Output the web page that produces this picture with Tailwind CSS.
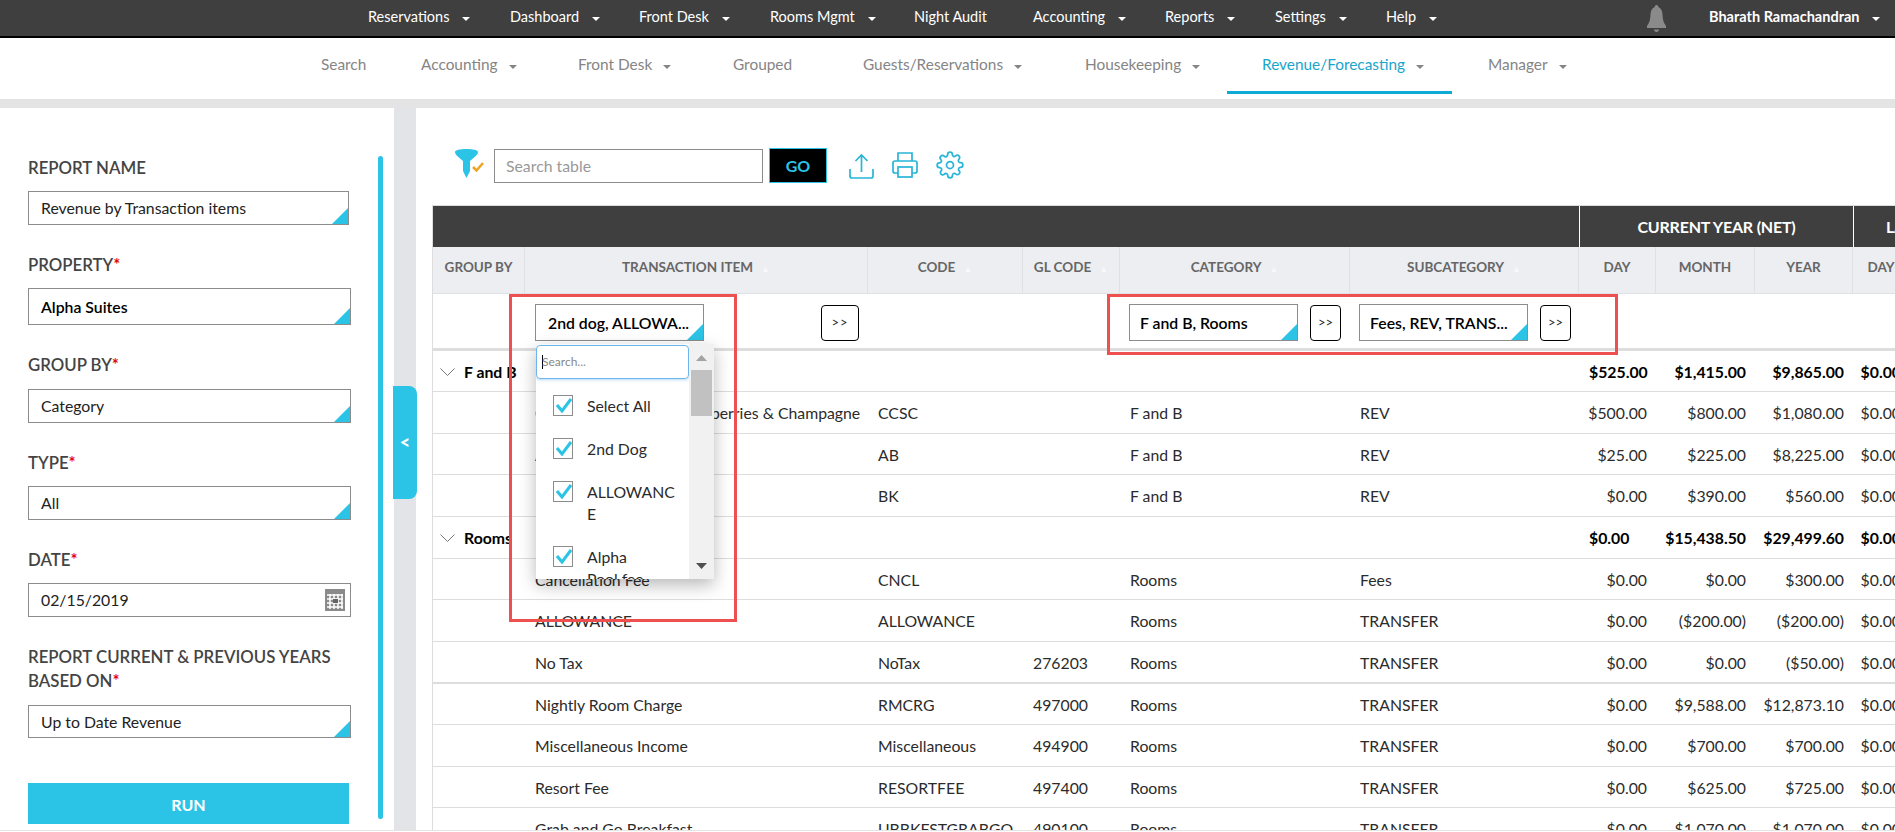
<!DOCTYPE html>
<html lang="en">
<head>
  <meta charset="UTF-8" />
  <title>Revenue by Transaction items</title>
  <script src="https://cdn.jsdelivr.net/npm/@tailwindcss/browser@4"></script>
</head>
<body class="h-[832px] w-[1895px] overflow-hidden bg-white font-['Lato',sans-serif] text-[#333]">

  <!-- Top nav -->
  <nav class="flex h-[38px] items-center border-b-2 border-black bg-[#3f3f3f] pb-[2px] pl-[368px] text-[14.5px] text-white">
    <a class="flex w-[142px] items-center">Reservations<svg class="ml-[13px] mt-[3px] h-[4px] w-2" viewBox="0 0 8 4" fill="#fff"><path d="M0 0h8L4 4z"/></svg></a>
    <a class="flex w-[129px] items-center">Dashboard<svg class="ml-[13px] mt-[3px] h-[4px] w-2" viewBox="0 0 8 4" fill="#fff"><path d="M0 0h8L4 4z"/></svg></a>
    <a class="flex w-[131px] items-center">Front Desk<svg class="ml-[13px] mt-[3px] h-[4px] w-2" viewBox="0 0 8 4" fill="#fff"><path d="M0 0h8L4 4z"/></svg></a>
    <a class="flex w-[144px] items-center">Rooms Mgmt<svg class="ml-[13px] mt-[3px] h-[4px] w-2" viewBox="0 0 8 4" fill="#fff"><path d="M0 0h8L4 4z"/></svg></a>
    <a class="flex w-[119px] items-center">Night Audit</a>
    <a class="flex w-[132px] items-center">Accounting<svg class="ml-[13px] mt-[3px] h-[4px] w-2" viewBox="0 0 8 4" fill="#fff"><path d="M0 0h8L4 4z"/></svg></a>
    <a class="flex w-[110px] items-center">Reports<svg class="ml-[13px] mt-[3px] h-[4px] w-2" viewBox="0 0 8 4" fill="#fff"><path d="M0 0h8L4 4z"/></svg></a>
    <a class="flex w-[111px] items-center">Settings<svg class="ml-[13px] mt-[3px] h-[4px] w-2" viewBox="0 0 8 4" fill="#fff"><path d="M0 0h8L4 4z"/></svg></a>
    <a class="flex w-[260px] items-center">Help<svg class="ml-[13px] mt-[3px] h-[4px] w-2" viewBox="0 0 8 4" fill="#fff"><path d="M0 0h8L4 4z"/></svg></a>
    <svg class="mt-[3px] h-[27px] w-[21px]" viewBox="0 0 21 27" fill="#8a8a8a"><path d="M10.5 0c1.2 0 1.8.8 1.8 2 3 1.2 4 4 4.200 7.500.2 4.500.8 8 3.500 11.500v2H1v-2c2.700-3.500 3.300-7 3.500-11.500C4.700 6 5.700 3.200 8.700 2c0-1.200.6-2 1.800-2z"/><path d="M8 24.500h5c0 1.500-1 2.500-2.500 2.500S8 26 8 24.500z"/></svg>
    <a class="ml-[42px] flex items-center font-bold">Bharath Ramachandran<svg class="ml-[13px] mt-[3px] h-[4px] w-2" viewBox="0 0 8 4" fill="#fff"><path d="M0 0h8L4 4z"/></svg></a>
  </nav>

  <!-- Sub nav -->
  <div class="flex h-[61px] pl-[321px] text-[15.4px] text-[#858585] [&>a]:border-b-[3px] [&>a]:border-transparent">
    <a class="flex h-[56px] w-[100px] items-center">Search</a>
    <a class="flex h-[56px] w-[157px] items-center">Accounting<svg class="ml-[11px] mt-1 h-[4px] w-2" viewBox="0 0 8 4" fill="#858585"><path d="M0 0h8L4 4z"/></svg></a>
    <a class="flex h-[56px] w-[155px] items-center">Front Desk<svg class="ml-[11px] mt-1 h-[4px] w-2" viewBox="0 0 8 4" fill="#858585"><path d="M0 0h8L4 4z"/></svg></a>
    <a class="flex h-[56px] w-[130px] items-center">Grouped</a>
    <a class="flex h-[56px] w-[222px] items-center">Guests/Reservations<svg class="ml-[11px] mt-1 h-[4px] w-2" viewBox="0 0 8 4" fill="#858585"><path d="M0 0h8L4 4z"/></svg></a>
    <a class="flex h-[56px] w-[142px] items-center">Housekeeping<svg class="ml-[11px] mt-1 h-[4px] w-2" viewBox="0 0 8 4" fill="#858585"><path d="M0 0h8L4 4z"/></svg></a>
    <a class="flex h-[56px] w-[225px] items-center border-[#0ea9d4]! pl-[35px] text-[#1aa5cb]">Revenue/Forecasting<svg class="ml-[11px] mt-1 h-[4px] w-2" viewBox="0 0 8 4" fill="#858585"><path d="M0 0h8L4 4z"/></svg></a>
    <a class="ml-[36px] flex h-[56px] items-center">Manager<svg class="ml-[11px] mt-1 h-[4px] w-2" viewBox="0 0 8 4" fill="#858585"><path d="M0 0h8L4 4z"/></svg></a>
  </div>
  <div class="h-[9px] bg-[#e4e4e4]"></div>

  <div class="flex h-[723px] border-b border-[#e4e4e4]">

    <!-- Report form -->
    <aside class="relative w-[394px] shrink-0 pl-[28px] pt-[48px] text-[15.8px] text-[#222]">
      <div class="absolute left-[378px] top-[48px] h-[663px] w-[5px] rounded-full bg-[#2bc4e6]"></div>

      <label class="mb-[11px] block h-6 text-[16.8px] font-semibold leading-6 text-[#444]">REPORT NAME</label>
      <div class="relative mb-[28px] flex h-[34px] w-[321px] items-center border border-[#8c8c8c] pl-3">Revenue by Transaction items<i class="absolute bottom-0 right-0 h-4 w-4 bg-[#2bc4e6] [clip-path:polygon(100%_0,100%_100%,0_100%)]"></i></div>

      <label class="mb-[11px] block h-6 text-[16.8px] font-semibold leading-6 text-[#444]">PROPERTY<span class="text-red-600">*</span></label>
      <div class="relative mb-[28px] flex h-[37px] w-[323px] items-center border border-[#8c8c8c] pl-3 font-semibold text-black">Alpha Suites<i class="absolute bottom-0 right-0 h-4 w-4 bg-[#2bc4e6] [clip-path:polygon(100%_0,100%_100%,0_100%)]"></i></div>

      <label class="mb-[12px] block h-6 text-[16.8px] font-semibold leading-6 text-[#444]">GROUP BY<span class="text-red-600">*</span></label>
      <div class="relative mb-[28px] flex h-[34px] w-[323px] items-center border border-[#8c8c8c] pl-3">Category<i class="absolute bottom-0 right-0 h-4 w-4 bg-[#2bc4e6] [clip-path:polygon(100%_0,100%_100%,0_100%)]"></i></div>

      <label class="mb-[11px] block h-6 text-[16.8px] font-semibold leading-6 text-[#444]">TYPE<span class="text-red-600">*</span></label>
      <div class="relative mb-[28px] flex h-[34px] w-[323px] items-center border border-[#8c8c8c] pl-3">All<i class="absolute bottom-0 right-0 h-4 w-4 bg-[#2bc4e6] [clip-path:polygon(100%_0,100%_100%,0_100%)]"></i></div>

      <label class="mb-[11px] block h-6 text-[16.8px] font-semibold leading-6 text-[#444]">DATE<span class="text-red-600">*</span></label>
      <div class="relative mb-[28px] flex h-[34px] w-[323px] items-center border border-[#8c8c8c] pl-3">02/15/2019
        <svg class="absolute right-[5px] top-[5px] h-[22px] w-5" viewBox="0 0 20 22"><rect width="20" height="22" fill="#8a8a8a"/><path d="M2 6h16M2 10h16M2 14h16M2 18h16M5 5v15M9 5v15M13 5v15M17 5v15" stroke="#fff" stroke-width="1.500" fill="none"/><rect x="8" y="10" width="5" height="4" fill="#666"/></svg>
      </div>

      <label class="mb-[12px] block text-[16.8px] font-semibold leading-6 text-[#444]">REPORT CURRENT &amp; PREVIOUS YEARS<br>BASED ON<span class="text-red-600">*</span></label>
      <div class="relative mb-[45px] flex h-[33px] w-[323px] items-center border border-[#8c8c8c] pl-3">Up to Date Revenue<i class="absolute bottom-0 right-0 h-4 w-4 bg-[#2bc4e6] [clip-path:polygon(100%_0,100%_100%,0_100%)]"></i></div>

      <button class="block h-[41px] w-[321px] bg-[#2bc4e6] pt-[2px] text-[16px] font-bold text-white">RUN</button>
    </aside>

    <!-- Collapse strip -->
    <div class="relative w-[22px] shrink-0 bg-[#e2e4e8]">
      <button class="absolute left-[-1px] top-[278px] flex h-[113px] w-6 items-center justify-center rounded-r-lg bg-[#2bc4e6] text-[18px] font-black text-white">&lt;</button>
    </div>

    <!-- Report -->
    <main class="relative min-w-0 flex-1 overflow-hidden">
      <div class="flex h-[97px] items-start pt-[40px] pl-[39px]">
        <svg class="mt-[1px] h-[30px] w-[30px]" viewBox="0 0 30 30"><path d="M0 3c0-2 5-3 11.500-3S23 1 23 3c0 3-5 6-8 9v10l-3.500 7L8 22V12C5 9 0 6 0 3z" fill="#2bc4e6"/><path d="M18 18l3.500 3.500L28 14" stroke="#eea322" stroke-width="2.500" fill="none"/></svg>
        <input class="ml-[9px] mt-[1px] h-[34px] w-[269px] border border-[#8c8c8c] pb-[2px] pl-[11px] text-[15.8px] placeholder:text-[#999]" placeholder="Search table" />
        <button class="ml-[6px] h-[35px] w-[58px] border border-[#2bc4e6] bg-black text-[16px] font-bold text-[#2bc4e6]">GO</button>
        <svg class="ml-[22px] mt-[5px] h-[26px] w-[25px]" viewBox="0 0 25 26" fill="none" stroke="#27b5d8" stroke-width="1.700"><path d="M12.500 19V2M6.500 8l6-6 6 6M1 16v7c0 1 .7 2 2 2h19c1.300 0 2-1 2-2v-7"/></svg>
        <svg class="ml-[18px] mt-[4px] h-[26px] w-[26px]" viewBox="0 0 26 26" fill="none" stroke="#27b5d8" stroke-width="1.700"><path d="M6 9V1h14v8M6 21H3c-1.200 0-2-.8-2-2v-8c0-1.200.8-2 2-2h20c1.200 0 2 .8 2 2v8c0 1.200-.8 2-2 2h-3"/><rect x="6" y="15" width="14" height="10"/></svg>
        <svg class="ml-[18px] mt-[3px] h-[28px] w-[28px]" viewBox="0 0 24 24" fill="none" stroke="#27b5d8" stroke-width="1.500"><circle cx="12" cy="12" r="3"/><path d="M19.400 15a1.650 1.650 0 0 0 .33 1.820l.06.06a2 2 0 1 1-2.830 2.830l-.06-.06a1.650 1.650 0 0 0-2.800 1.170V21a2 2 0 1 1-4 0v-.09a1.650 1.650 0 0 0-2.850-1.110l-.06.06a2 2 0 1 1-2.830-2.830l.06-.06a1.650 1.650 0 0 0-1.170-2.800H3a2 2 0 1 1 0-4h.09a1.650 1.650 0 0 0 1.110-2.850l-.06-.06a2 2 0 1 1 2.830-2.830l.06.06a1.650 1.650 0 0 0 1.820.33H9a1.650 1.650 0 0 0 1-1.510V3a2 2 0 1 1 4 0v.09a1.650 1.650 0 0 0 2.800 1.170l.06-.06a2 2 0 1 1 2.830 2.830l-.06.06a1.650 1.650 0 0 0-.33 1.820V9a1.650 1.650 0 0 0 1.510 1H21a2 2 0 1 1 0 4h-.09a1.650 1.650 0 0 0-1.510 1z"/></svg>
      </div>

      <table class="ml-[16px] w-[1477px] table-fixed border-separate border-spacing-0 border-l border-t border-[#ddd] text-[15.8px]">
        <colgroup>
          <col class="w-[92px]"><col class="w-[343px]"><col class="w-[155px]"><col class="w-[97px]"><col class="w-[230px]"><col class="w-[229px]"><col class="w-[77px]"><col class="w-[99px]"><col class="w-[98px]"><col class="w-[57px]">
        </colgroup>
        <thead>
          <tr class="h-[41px] bg-[#3f3f3f] text-[16px] font-bold text-white">
            <th colspan="6"></th>
            <th colspan="3" class="border-l border-white tracking-[-0.2px]">CURRENT YEAR (NET)</th>
            <th class="border-l border-white pl-[32px] text-left whitespace-nowrap tracking-[-0.2px]">LAST YEAR (NET)</th>
          </tr>
          <tr class="h-[47px] bg-[#eceef2] text-[13.5px] font-bold text-[#666] [&>th]:border-r [&>th]:border-[#dfe1e5] [&>th]:border-b [&>th]:pb-[6px]">
            <th>GROUP BY</th>
            <th>TRANSACTION ITEM<span class="ml-2 text-[9px] text-[#f8f8fa]">▲</span></th>
            <th>CODE<span class="ml-2 text-[9px] text-[#f8f8fa]">▲</span></th>
            <th>GL CODE<span class="ml-2 text-[9px] text-[#f8f8fa]">▲</span></th>
            <th>CATEGORY<span class="ml-2 text-[9px] text-[#f8f8fa]">▲</span></th>
            <th>SUBCATEGORY<span class="ml-2 text-[9px] text-[#f8f8fa]">▲</span></th>
            <th>DAY</th>
            <th>MONTH</th>
            <th>YEAR</th>
            <th>DAY</th>
          </tr>
        </thead>
        <tbody class="text-[#2b2b2b] [&_td]:border-b [&_td]:border-[#ddd] [&_td]:pl-[10px] [&_td]:pt-[1px] [&_td:nth-child(n+7)]:pl-0 [&_td:nth-child(n+7)]:pr-[9px] [&_td:nth-child(n+7)]:text-right [&_td]:whitespace-nowrap">
          <!-- column filters -->
          <tr class="h-[57px] [&>td]:border-b-[3px]! [&>td]:pt-[3px]!">
            <td></td>
            <td>
              <div class="flex items-center">
                <div class="relative flex h-[37px] w-[169px] items-center border border-[#8c8c8c] pl-3 font-semibold text-black">2nd dog, ALLOWA...<i class="absolute bottom-0 right-0 h-4 w-4 bg-[#2bc4e6] [clip-path:polygon(100%_0,100%_100%,0_100%)]"></i></div>
                <button class="ml-[117px] h-[36px] w-[38px] rounded border border-black text-[13px] tracking-[1px]">&gt;&gt;</button>
              </div>
            </td>
            <td></td><td></td>
            <td>
              <div class="-ml-px flex items-center">
                <div class="relative flex h-[37px] w-[169px] shrink-0 items-center border border-[#8c8c8c] pl-[10px] font-semibold text-black">F and B, Rooms<i class="absolute bottom-0 right-0 h-4 w-4 bg-[#2bc4e6] [clip-path:polygon(100%_0,100%_100%,0_100%)]"></i></div>
                <button class="ml-[12px] h-[36px] w-[31px] shrink-0 rounded border border-black text-[13px]">&gt;&gt;</button>
              </div>
            </td>
            <td>
              <div class="-ml-px flex items-center">
                <div class="relative flex h-[37px] w-[169px] shrink-0 items-center border border-[#8c8c8c] pl-[10px] font-semibold text-black">Fees, REV, TRANS...<i class="absolute bottom-0 right-0 h-4 w-4 bg-[#2bc4e6] [clip-path:polygon(100%_0,100%_100%,0_100%)]"></i></div>
                <button class="ml-[12px] h-[36px] w-[31px] shrink-0 rounded border border-black text-[13px]">&gt;&gt;</button>
              </div>
            </td>
            <td></td><td></td><td></td><td></td>
          </tr>
          <!-- F and B -->
          <tr class="h-[41px] font-bold text-black">
            <td colspan="2" class="pl-[7px]!"><div class="flex items-center"><svg class="mr-[9px] h-2 w-[15px]" viewBox="0 0 15 8" fill="none" stroke="#777"><path d="M.5.5l7 7 7-7"/></svg>F and B</div></td>
            <td></td><td></td><td></td><td></td><td>$525.00</td><td>$1,415.00</td><td>$9,865.00</td><td>$0.00</td>
          </tr>
          <tr class="h-[42px]"><td></td><td>Chocolate Covered Strawberries &amp; Champagne</td><td>CCSC</td><td></td><td>F and B</td><td>REV</td><td>$500.00</td><td>$800.00</td><td>$1,080.00</td><td>$0.00</td></tr>
          <tr class="h-[41px]"><td></td><td>Alpha Breakfast</td><td>AB</td><td></td><td>F and B</td><td>REV</td><td>$25.00</td><td>$225.00</td><td>$8,225.00</td><td>$0.00</td></tr>
          <tr class="h-[42px]"><td></td><td>Breakfast</td><td>BK</td><td></td><td>F and B</td><td>REV</td><td>$0.00</td><td>$390.00</td><td>$560.00</td><td>$0.00</td></tr>
          <!-- Rooms -->
          <tr class="h-[42px] font-bold text-black">
            <td colspan="2" class="pl-[7px]!"><div class="flex items-center"><svg class="mr-[9px] h-2 w-[15px]" viewBox="0 0 15 8" fill="none" stroke="#777"><path d="M.5.5l7 7 7-7"/></svg>Rooms</div></td>
            <td></td><td></td><td></td><td></td><td>$0.00</td><td>$15,438.50</td><td>$29,499.60</td><td>$0.00</td>
          </tr>
          <tr class="h-[41px]"><td></td><td>Cancellation Fee</td><td>CNCL</td><td></td><td>Rooms</td><td>Fees</td><td>$0.00</td><td>$0.00</td><td>$300.00</td><td>$0.00</td></tr>
          <tr class="h-[42px]"><td></td><td>ALLOWANCE</td><td>ALLOWANCE</td><td></td><td>Rooms</td><td>TRANSFER</td><td>$0.00</td><td>($200.00)</td><td>($200.00)</td><td>$0.00</td></tr>
          <tr class="h-[42px] [&>td]:border-b-2!"><td></td><td>No Tax</td><td>NoTax</td><td>276203</td><td>Rooms</td><td>TRANSFER</td><td>$0.00</td><td>$0.00</td><td>($50.00)</td><td>$0.00</td></tr>
          <tr class="h-[41px]"><td></td><td>Nightly Room Charge</td><td>RMCRG</td><td>497000</td><td>Rooms</td><td>TRANSFER</td><td>$0.00</td><td>$9,588.00</td><td>$12,873.10</td><td>$0.00</td></tr>
          <tr class="h-[42px]"><td></td><td>Miscellaneous Income</td><td>Miscellaneous</td><td>494900</td><td>Rooms</td><td>TRANSFER</td><td>$0.00</td><td>$700.00</td><td>$700.00</td><td>$0.00</td></tr>
          <tr class="h-[41px]"><td></td><td>Resort Fee</td><td>RESORTFEE</td><td>497400</td><td>Rooms</td><td>TRANSFER</td><td>$0.00</td><td>$625.00</td><td>$725.00</td><td>$0.00</td></tr>
          <tr class="h-[42px]"><td></td><td>Grab and Go Breakfast</td><td>UBBKFSTGRABGO</td><td>490100</td><td>Rooms</td><td>TRANSFER</td><td>$0.00</td><td>$1,070.00</td><td>$1,070.00</td><td>$0.00</td></tr>
        </tbody>
      </table>

      <!-- Open multiselect -->
      <div class="absolute left-[120px] top-[236px] z-10 flex h-[235px] w-[178px] overflow-hidden bg-white text-[15.8px] text-[#2b2b2b] shadow-[0_6px_16px_rgba(0,0,0,0.28)]">
        <div class="w-[153px] shrink-0 pt-[1px]">
          <div class="flex h-[34px] items-center rounded border border-[#6eb5ec] pl-[5px] text-[12px] text-[#888] shadow-[0_1px_3px_rgba(110,181,236,0.5)]"><span class="mr-[-1px] h-[14px] w-px bg-black"></span>Search...</div>
          <div class="pl-[17px] pt-[16px]">
            <div class="mb-[21px] flex items-start"><span class="relative h-[21px] w-[20px] shrink-0 border border-[#8c8c8c]"><svg class="absolute left-[2px] top-[2px] h-[15px] w-[16px]" viewBox="0 0 16 15" fill="none" stroke="#2bc4e6" stroke-width="3"><path d="M1 7l5 6L15 1"/></svg></span><span class="ml-[14px] leading-[22px]">Select All</span></div>
            <div class="mb-[21px] flex items-start"><span class="relative h-[21px] w-[20px] shrink-0 border border-[#8c8c8c]"><svg class="absolute left-[2px] top-[2px] h-[15px] w-[16px]" viewBox="0 0 16 15" fill="none" stroke="#2bc4e6" stroke-width="3"><path d="M1 7l5 6L15 1"/></svg></span><span class="ml-[14px] leading-[22px]">2nd Dog</span></div>
            <div class="mb-[21px] flex items-start"><span class="relative h-[21px] w-[20px] shrink-0 border border-[#8c8c8c]"><svg class="absolute left-[2px] top-[2px] h-[15px] w-[16px]" viewBox="0 0 16 15" fill="none" stroke="#2bc4e6" stroke-width="3"><path d="M1 7l5 6L15 1"/></svg></span><span class="ml-[14px] leading-[22px]">ALLOWANC<br>E</span></div>
            <div class="flex items-start"><span class="relative h-[21px] w-[20px] shrink-0 border border-[#8c8c8c]"><svg class="absolute left-[2px] top-[2px] h-[15px] w-[16px]" viewBox="0 0 16 15" fill="none" stroke="#2bc4e6" stroke-width="3"><path d="M1 7l5 6L15 1"/></svg></span><span class="ml-[14px] leading-[22px]">Alpha<br>Pool fee</span></div>
          </div>
        </div>
        <div class="relative flex-1 bg-[#f1f1f1]">
          <svg class="absolute left-[7px] top-[11px] h-[6px] w-[11px]" viewBox="0 0 11 6" fill="#a3a3a3"><path d="M0 6h11L5.500 0z"/></svg>
          <div class="absolute left-[2px] top-[26px] h-[46px] w-[21px] bg-[#c1c1c1]"></div>
          <svg class="absolute bottom-[10px] left-[7px] h-[6px] w-[11px]" viewBox="0 0 11 6" fill="#505050"><path d="M0 0h11L5.500 6z"/></svg>
        </div>
      </div>

      <!-- Red annotation boxes -->
      <div class="absolute left-[93px] top-[186px] z-20 h-[328px] w-[228px] border-[3px] border-[#ee4f4f]"></div>
      <div class="absolute left-[691px] top-[186px] z-20 h-[61px] w-[511px] border-[3px] border-[#ee4f4f]"></div>
    </main>
  </div>
</body>
</html>
